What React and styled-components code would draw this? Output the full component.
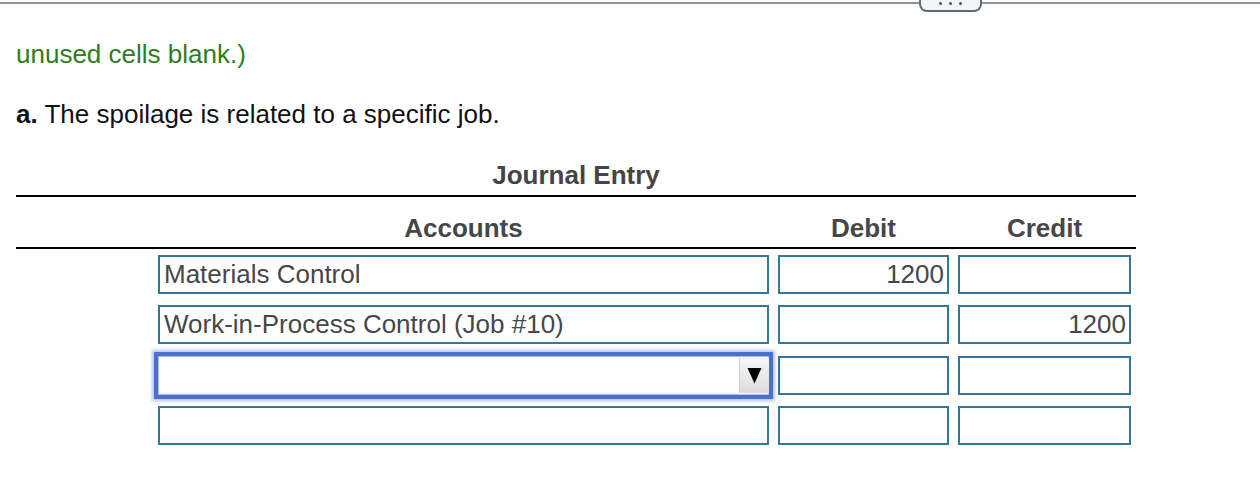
import React from "react";
import styled, { createGlobalStyle, css } from "styled-components";

const GlobalStyle = createGlobalStyle`
  html, body {
    margin: 0;
    padding: 0;
    background: #fff;
  }
  body {
    font-family: "Liberation Sans", Arial, sans-serif;
  }
`;

const TopBar = styled.div`
  display: grid;
  grid-template-columns: 919px 63px 1fr;
  height: 12px;
`;

const BarLine = styled.div`
  height: 2px;
  margin-top: 2px;
  background: #8b95a2;
`;

const MoreButton = styled.div`
  box-sizing: border-box;
  height: 12px;
  border: 2px solid #5f6b78;
  border-top: none;
  border-radius: 0 0 8px 8px;
  background: #f3f4f7;
  display: flex;
  justify-content: center;
  align-items: flex-start;
  gap: 7px;
  padding-top: 2px;
`;

const Dot = styled.span`
  width: 3px;
  height: 3px;
  border-radius: 50%;
  background: #4b5563;
`;

const Content = styled.div`
  padding: 27px 16px 0 16px;
`;

const Hint = styled.p`
  margin: 0;
  font-size: 26px;
  line-height: 30px;
  color: #2e7d1c;
`;

const Question = styled.p`
  margin: 30px 0 0 0;
  font-size: 26px;
  line-height: 30px;
  color: #111;

  b {
    font-weight: bold;
  }
`;

const Journal = styled.div`
  width: 1120px;
  margin-top: 31px;
`;

const Title = styled.div`
  font-size: 26px;
  line-height: 30px;
  font-weight: bold;
  color: #454545;
  text-align: center;
  padding-bottom: 5px;
  border-bottom: 2px solid #000;
`;

const Grid = styled.div`
  display: grid;
  grid-template-columns: 133px 611px 171px 173px;
  column-gap: 9px;
`;

const HeadRow = styled(Grid)`
  height: 52px;
  border-bottom: 2px solid #000;
  align-items: end;
  box-sizing: border-box;
`;

const HeadCell = styled.div`
  font-size: 26px;
  line-height: 30px;
  font-weight: bold;
  color: #474747;
  text-align: center;
  padding-bottom: 4px;
`;

const Rows = styled.div`
  display: flex;
  flex-direction: column;
  gap: 11.3px;
  padding-top: 6px;
`;

const Field = styled.div`
  position: relative;
  box-sizing: border-box;
  height: 39px;
  border: 2px solid #31799a;
  background: #fff;
  font-size: 26px;
  line-height: 35px;
  color: #474747;
  padding: 0 3px 0 4px;
  white-space: nowrap;
  overflow: hidden;
  text-align: ${(p) => (p.$num ? "right" : "left")};

  ${(p) =>
    p.$focused &&
    css`
      height: 47px;
      margin: -4px;
      border: 4px solid #4a6fcf;
      box-shadow: 0 0 3px 2px rgba(74, 111, 207, 0.4),
        inset 0 0 1px 1px rgba(74, 111, 207, 0.5);
      overflow: visible;
    `}
`;

const DropButton = styled.div`
  position: absolute;
  top: 2px;
  right: 0;
  bottom: 2px;
  width: 30px;
  box-sizing: border-box;
  border-left: 1px solid #cfcfcf;
  background: linear-gradient(#f6f6f6, #dcdcdc);
  display: flex;
  align-items: center;
  justify-content: center;
`;

const entries = [
  { account: "Materials Control", debit: "1200", credit: "" },
  { account: "Work-in-Process Control (Job #10)", debit: "", credit: "1200" },
  { account: "", debit: "", credit: "", focused: true },
  { account: "", debit: "", credit: "" },
];

function Triangle() {
  return (
    <svg width="15" height="17" viewBox="0 0 15 17">
      <path d="M0.5 1 L14.5 1 L7.5 16.5 Z" fill="#000" />
    </svg>
  );
}

export default function App() {
  return (
    <>
      <GlobalStyle />
      <TopBar>
        <BarLine />
        <MoreButton>
          <Dot />
          <Dot />
          <Dot />
        </MoreButton>
        <BarLine />
      </TopBar>
      <Content>
        <Hint>unused cells blank.)</Hint>
        <Question>
          <b>a.</b> The spoilage is related to a specific job.
        </Question>
        <Journal>
          <Title>Journal Entry</Title>
          <HeadRow>
            <span />
            <HeadCell>Accounts</HeadCell>
            <HeadCell>Debit</HeadCell>
            <HeadCell>Credit</HeadCell>
          </HeadRow>
          <Rows>
            {entries.map((row, i) => (
              <Grid key={i}>
                <span />
                <Field $focused={row.focused}>
                  {row.account}
                  {row.focused && (
                    <DropButton>
                      <Triangle />
                    </DropButton>
                  )}
                </Field>
                <Field $num>{row.debit}</Field>
                <Field $num>{row.credit}</Field>
              </Grid>
            ))}
          </Rows>
        </Journal>
      </Content>
    </>
  );
}
